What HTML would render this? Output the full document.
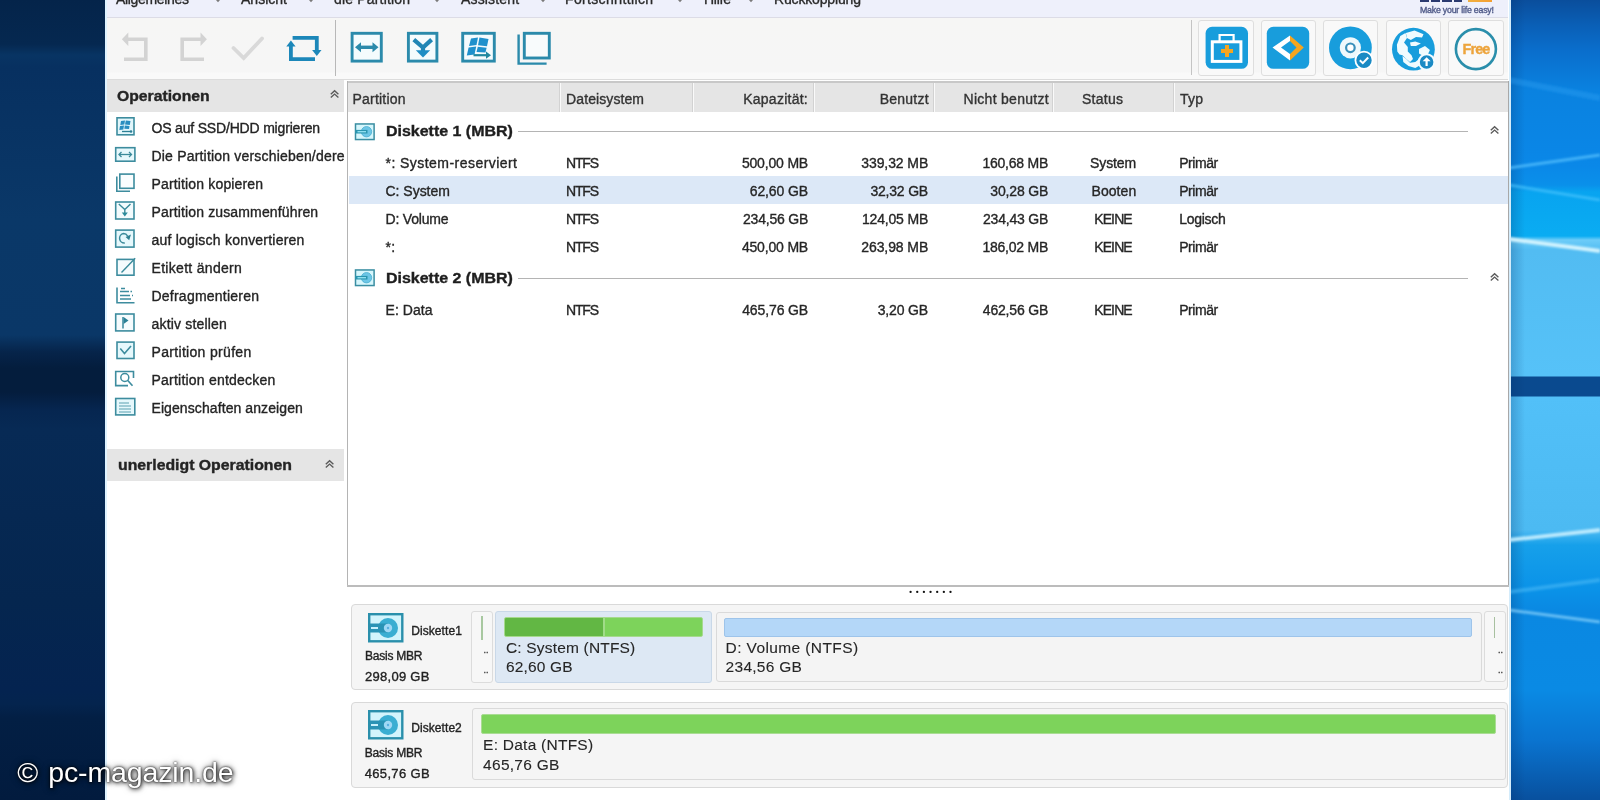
<!DOCTYPE html>
<html><head><meta charset="utf-8"><title>Partition Assistant</title>
<style>
html,body{margin:0;padding:0}
body{width:1600px;height:800px;position:relative;overflow:hidden;background:#0a3868;font-family:"Liberation Sans",sans-serif}
.b{position:absolute;box-sizing:content-box}
.t{position:absolute;white-space:nowrap;font-family:"Liberation Sans",sans-serif;-webkit-text-stroke:0.35px currentColor}
</style></head><body><div style="position:absolute;left:0;top:0;width:1600px;height:800px;overflow:hidden;filter:blur(0.45px)">
<div class="b" style="left:0;top:0;width:106px;height:800px;background:linear-gradient(to bottom,#04244a 0px,#052850 44px,#083463 55px,#073060 68px,#0a3868 220px,#0a3767 335px,#06244a 352px,#041d3d 368px,#041d3d 392px,#062650 410px,#072a55 430px,#05264f 600px,#042350 690px,#04244e 704px,#031f44 718px,#021b3e 800px)"></div>
<svg class="b" style="left:1509px;top:0" width="91" height="800" viewBox="0 0 91 800">
<defs>
<linearGradient id="rg" x1="0" y1="0" x2="0" y2="800" gradientUnits="userSpaceOnUse">
<stop offset="0.00000" stop-color="#0a4e9c"/>
<stop offset="0.03125" stop-color="#0a5fb6"/>
<stop offset="0.06250" stop-color="#0a6ecc"/>
<stop offset="0.09375" stop-color="#0a7ad8"/>
<stop offset="0.11250" stop-color="#0a82e0"/>
<stop offset="0.18750" stop-color="#0a86e6"/>
<stop offset="0.20750" stop-color="#0a88e8"/>
<stop offset="0.23125" stop-color="#0a90ea"/>
<stop offset="0.24000" stop-color="#08a4f0"/>
<stop offset="0.29500" stop-color="#0aacf2"/>
<stop offset="0.30000" stop-color="#6cccf8"/>
<stop offset="0.31250" stop-color="#52bcf2"/>
<stop offset="0.47000" stop-color="#56c2f8"/>
<stop offset="0.47125" stop-color="#0a4a8f"/>
<stop offset="0.49500" stop-color="#0a4a8f"/>
<stop offset="0.49625" stop-color="#52c0f8"/>
<stop offset="0.66250" stop-color="#4cbaf2"/>
<stop offset="0.68125" stop-color="#16a0ea"/>
<stop offset="0.73750" stop-color="#0a92e8"/>
<stop offset="0.76500" stop-color="#0a88e2"/>
<stop offset="0.86250" stop-color="#0a8ae4"/>
<stop offset="0.92500" stop-color="#0a74d0"/>
<stop offset="1.00000" stop-color="#08509e"/>
</linearGradient>
<linearGradient id="sh" x1="0" y1="0" x2="1" y2="0"><stop offset="0" stop-color="#002a60" stop-opacity="0.22"/><stop offset="1" stop-color="#002a60" stop-opacity="0"/></linearGradient>
<filter id="bl" x="-10%" y="-50%" width="120%" height="200%"><feGaussianBlur stdDeviation="1"/></filter>
</defs>
<rect x="0" y="0" width="91" height="800" fill="url(#rg)"/>
<rect x="2" y="0" width="14" height="800" fill="url(#sh)"/>
<g filter="url(#bl)">
<path d="M0 80 L91 98" stroke="rgba(60,170,250,0.3)" stroke-width="6"/>
<path d="M0 168 L91 155" stroke="rgba(90,195,255,0.7)" stroke-width="3"/>
<path d="M0 185 L91 200" stroke="rgba(80,200,255,0.6)" stroke-width="3"/>
<path d="M0 239 L91 251" stroke="rgba(215,245,255,0.95)" stroke-width="4"/>
<path d="M0 540 L91 530" stroke="rgba(200,240,255,0.9)" stroke-width="4"/>
<path d="M0 592 L91 580" stroke="rgba(90,195,250,0.45)" stroke-width="4"/>
<path d="M0 610 L91 622" stroke="rgba(150,218,255,0.65)" stroke-width="3"/>
</g>
</svg>
<div class="b" style="left:105px;top:0px;width:1406px;height:800px;background:#fff"></div>
<div class="b" style="left:105px;top:0px;width:2px;height:800px;background:#dff3ff"></div>
<div class="b" style="left:1509px;top:0px;width:2px;height:800px;background:#d4ecfb"></div>
<div class="b" style="left:107px;top:0px;width:1401px;height:17px;background:#eef0fb"></div>
<div class="b" style="left:107px;top:17px;width:1401px;height:1px;background:#dcdce6"></div>
<div class="b" style="left:107px;top:18px;width:1401px;height:61px;background:linear-gradient(to bottom,#f6f6f5 0,#f6f6f6 54px,#f9f9f9 55px,#f9f9f9 61px)"></div>
<div class="b" style="left:107px;top:79px;width:1401px;height:1px;background:#dcdcdc"></div>
<div class="t" style="left:116.00px;top:-7.55px;font-size:14px;line-height:14px;color:#2a2a2a;letter-spacing:-0.330px;">Allgemeines</div>
<div class="t" style="left:241.00px;top:-7.55px;font-size:14px;line-height:14px;color:#2a2a2a;letter-spacing:0.013px;">Ansicht</div>
<div class="t" style="left:334.00px;top:-7.55px;font-size:14px;line-height:14px;color:#2a2a2a;letter-spacing:0.173px;">die Partition</div>
<div class="t" style="left:461.00px;top:-7.55px;font-size:14px;line-height:14px;color:#2a2a2a;letter-spacing:0.154px;">Assistent</div>
<div class="t" style="left:565.00px;top:-7.55px;font-size:14px;line-height:14px;color:#2a2a2a;letter-spacing:0.341px;">Fortschrittlich</div>
<div class="t" style="left:704.00px;top:-7.55px;font-size:14px;line-height:14px;color:#2a2a2a;letter-spacing:-0.250px;">Hilfe</div>
<div class="t" style="left:774.00px;top:-7.55px;font-size:14px;line-height:14px;color:#2a2a2a;letter-spacing:-0.160px;">Rückkopplung</div>
<svg class="b" style="left:216px;top:0" width="4" height="3"><path d="M0 0 L4 0 L2 2.2 Z" fill="#7a7a7a"/></svg>
<svg class="b" style="left:309px;top:0" width="4" height="3"><path d="M0 0 L4 0 L2 2.2 Z" fill="#7a7a7a"/></svg>
<svg class="b" style="left:435px;top:0" width="4" height="3"><path d="M0 0 L4 0 L2 2.2 Z" fill="#7a7a7a"/></svg>
<svg class="b" style="left:541px;top:0" width="4" height="3"><path d="M0 0 L4 0 L2 2.2 Z" fill="#7a7a7a"/></svg>
<svg class="b" style="left:678px;top:0" width="4" height="3"><path d="M0 0 L4 0 L2 2.2 Z" fill="#7a7a7a"/></svg>
<svg class="b" style="left:749px;top:0" width="4" height="3"><path d="M0 0 L4 0 L2 2.2 Z" fill="#7a7a7a"/></svg>
<div class="b" style="left:1420px;top:0px;width:9px;height:1.6px;background:#2a3a70"></div>
<div class="b" style="left:1431px;top:0px;width:9px;height:1.6px;background:#2a3a70"></div>
<div class="b" style="left:1442px;top:0px;width:10px;height:1.6px;background:#2a3a70"></div>
<div class="b" style="left:1454px;top:0px;width:8px;height:1.6px;background:#2a3a70"></div>
<div class="b" style="left:1468px;top:0px;width:24px;height:2.2px;background:linear-gradient(to right,#f0b040,#f5a030)"></div>
<div class="t" style="left:1420.00px;top:5.65px;font-size:8.8px;line-height:8.8px;color:#4f5a88;letter-spacing:-0.225px;">Make your life easy!</div>
<div class="b" style="left:335px;top:20px;width:1px;height:56px;background:#b8b8b8"></div>
<div class="b" style="left:1191px;top:20px;width:1px;height:55px;background:#c4c4c4"></div>
<svg class="b" style="left:0;top:0" width="1600" height="90" viewBox="0 0 1600 90">
<g fill="none" stroke-linejoin="miter">
<path d="M127 39.3 H145.8 V59.3 H124" stroke="#d3d3d3" stroke-width="3.6"/>
<polygon points="121.9,39.3 128.3,32.5 128.3,46" fill="#d3d3d3"/>
<path d="M201 39.3 H182.2 V59.3 H204" stroke="#d3d3d3" stroke-width="3.6"/>
<polygon points="206.9,39.3 200.5,32.5 200.5,46" fill="#d3d3d3"/>
<path d="M233.5 48 L243.7 58 L262 38.5" stroke="#d9d9d9" stroke-width="3.8" stroke-linecap="round"/>
<path d="M290.9 45.5 V59.2 H315" stroke="#1c87b9" stroke-width="3.8"/>
<path d="M292.6 37.9 H316.8 V50.5" stroke="#1c87b9" stroke-width="3.8"/>
<polygon points="286.3,46.5 295.6,46.5 290.9,40.6" fill="#1c87b9"/>
<polygon points="312.1,50 321.5,50 316.8,56" fill="#1c87b9"/>
<rect x="352.1" y="33.3" width="29.2" height="27.8" stroke="#2b8aab" stroke-width="2.9" fill="#f4fbfd"/>
<path d="M359.5 47.3 H374" stroke="#2b8aab" stroke-width="3.4"/>
<polygon points="355,47.3 361,42.3 361,52.3" fill="#2b8aab"/>
<polygon points="378.5,47.3 372.5,42.3 372.5,52.3" fill="#2b8aab"/>
<rect x="408.4" y="33.3" width="28.5" height="27.8" stroke="#2b8aab" stroke-width="2.9" fill="#f4fbfd"/>
<path d="M413.8 39.6 L423 47.5 L431.6 39.6" stroke="#2186b5" stroke-width="4.2"/>
<path d="M423 46 V52" stroke="#2186b5" stroke-width="4.2"/>
<polygon points="415.8,50.3 430.2,50.3 423,57.5" fill="#1f8dc4"/>
<rect x="462.7" y="33.3" width="31.6" height="27.8" stroke="#2b8aab" stroke-width="2.9" fill="#f4fbfd"/>
<g fill="#1e90cc">
<polygon points="471,38.5 478,37.5 476.5,45 469,46"/>
<polygon points="479.5,37.6 488.5,39 487,46.2 478,45.2"/>
<polygon points="468.6,47.5 476.2,46.6 474.5,54.5 466.8,55.5"/>
<polygon points="477.8,46.8 486.6,47.8 485.5,52.5 476.5,52"/>
</g>
<path d="M473.5 55.2 H487" stroke="#21889f" stroke-width="2.2"/>
<polygon points="491,55.2 486,51.6 486,58.8" fill="#21889f"/>
<rect x="524.3" y="33.3" width="25" height="24.7" stroke="#2b8aab" stroke-width="2.9" fill="#f8fbfc"/>
<path d="M518.6 34.6 V63.6 H546.6" stroke="#2b8aab" stroke-width="2.4"/>
</g>
</svg>
<div class="b" style="left:1198px;top:20.2px;width:54.0px;height:54px;border:1px solid #dedede;border-radius:3px;background:#f9f9f9"></div>
<div class="b" style="left:1261px;top:20.2px;width:53.2px;height:54px;border:1px solid #dedede;border-radius:3px;background:#f9f9f9"></div>
<div class="b" style="left:1323.3px;top:20.2px;width:52.7px;height:54px;border:1px solid #dedede;border-radius:3px;background:#f9f9f9"></div>
<div class="b" style="left:1385.9px;top:20.2px;width:53.5px;height:54px;border:1px solid #dedede;border-radius:3px;background:#f9f9f9"></div>
<div class="b" style="left:1448.4px;top:20.2px;width:54.0px;height:54px;border:1px solid #dedede;border-radius:3px;background:#f9f9f9"></div>
<svg class="b" style="left:1190px;top:15px" width="320" height="70" viewBox="1190 15 320 70">
<rect x="1205.6" y="26.8" width="42.4" height="42" rx="6.5" fill="#189ddc"/>
<path d="M1219.6 41 V35 H1233.6 V41" fill="none" stroke="#fff" stroke-width="2.2"/>
<rect x="1212.3" y="41.8" width="28.6" height="19.6" fill="none" stroke="#fff" stroke-width="3"/>
<path d="M1227 45 V57 M1221 51 H1233" stroke="#f5a51f" stroke-width="4"/>
<rect x="1266.8" y="26.8" width="42.4" height="42" rx="6.5" fill="#189ddc"/>
<polygon points="1290,35.5 1272.5,47.6 1290,60.5 1290,54 1281,47.6 1290,41" fill="#fff"/>
<polygon points="1290,35.5 1303.8,47.6 1290,60.5 1290,54 1296.5,47.6 1290,41" fill="#f5a51f"/>
<circle cx="1350.4" cy="47.8" r="21.4" fill="#189ddc"/>
<circle cx="1350.4" cy="47.8" r="10.6" fill="#eef8fc"/>
<circle cx="1350.4" cy="47.8" r="4.3" fill="#fff" stroke="#3a90bb" stroke-width="2.2"/>
<circle cx="1364" cy="60.2" r="8.6" fill="#1a8ac4" stroke="#fff" stroke-width="1.8"/>
<path d="M1359.8 60.3 L1362.8 63.2 L1368.2 57.5" fill="none" stroke="#fff" stroke-width="2"/>
<circle cx="1413.4" cy="49.2" r="21.4" fill="#189ddc"/>
<g fill="#f0fbfe">
<polygon points="1400.3,36.1 1405.5,33.1 1407.0,38.0 1404.0,42.5 1407.8,47.0 1407.8,51.5 1411.5,55.3 1413.0,59.0 1410.0,62.0 1406.3,59.0 1402.5,55.3 1399.5,54.5 1397.3,51.5 1396.9,44.8"/>
<polygon points="1405.9,33.1 1414.5,30.5 1423.5,34.3 1422.0,37.6 1416.0,36.9 1410.8,39.9 1407.0,38.0"/>
<polygon points="1410.0,42.5 1415.3,41.4 1420.9,43.6 1416.0,45.9 1410.8,45.9"/>
<polygon points="1419.0,48.9 1425.0,45.9 1429.9,50.0 1428.0,54.1 1422.0,55.3 1419.0,53.4"/>
<polygon points="1402.5,56.0 1406.3,59.0 1410.0,62.8 1415.3,62.0 1419.0,59.0 1420.5,65.0 1415.3,68.0 1408.5,66.1 1403.3,62.0"/>
</g>
<circle cx="1426.6" cy="62" r="7.8" fill="#1a8ac4" stroke="#f4fcff" stroke-width="2"/>
<path d="M1426.6 66 V59.5" stroke="#fff" stroke-width="2.2"/>
<polygon points="1422.6,61.3 1430.6,61.3 1426.6,57.2" fill="#fff"/>
<circle cx="1475.9" cy="49.1" r="20" fill="none" stroke="#2a8eab" stroke-width="2.6"/>
</svg>
<div class="t" style="left:1462.40px;top:42.13px;font-size:14.5px;line-height:14.5px;color:#eda43c;font-weight:bold;letter-spacing:-0.865px;">Free</div>
<div class="b" style="left:107px;top:80px;width:237px;height:31.5px;background:#e5e5e5"></div>
<div class="t" style="left:117.40px;top:88.75px;font-size:14px;line-height:14px;color:#242424;transform:scaleX(1.1230);transform-origin:0 0;font-weight:bold;">Operationen</div>
<svg class="b" style="left:329px;top:88px" width="12" height="12"><path d="M1.8 6.2 L5.6 2.7 L9.4 6.2 M1.8 9.6 L5.6 6.1 L9.4 9.6" fill="none" stroke="#5a5a5a" stroke-width="1.4"/></svg>
<div class="b" style="left:107px;top:449.2px;width:237px;height:31.5px;background:#e5e5e5"></div>
<div class="t" style="left:117.60px;top:457.95px;font-size:14px;line-height:14px;color:#242424;transform:scaleX(1.1292);transform-origin:0 0;font-weight:bold;">unerledigt Operationen</div>
<svg class="b" style="left:324px;top:458px" width="12" height="12"><path d="M1.8 6.2 L5.6 2.7 L9.4 6.2 M1.8 9.6 L5.6 6.1 L9.4 9.6" fill="none" stroke="#5a5a5a" stroke-width="1.4"/></svg>
<div class="b" style="left:0;top:0;width:345px;height:800px;overflow:hidden">
<div class="t" style="left:151.50px;top:120.65px;font-size:14px;line-height:14px;color:#242424;letter-spacing:-0.182px;">OS auf SSD/HDD migrieren</div>
<div class="t" style="left:151.50px;top:148.65px;font-size:14px;line-height:14px;color:#242424;letter-spacing:0.189px;">Die Partition verschieben/dere</div>
<div class="t" style="left:151.50px;top:176.65px;font-size:14px;line-height:14px;color:#242424;letter-spacing:0.154px;">Partition kopieren</div>
<div class="t" style="left:151.50px;top:204.65px;font-size:14px;line-height:14px;color:#242424;letter-spacing:0.141px;">Partition zusammenführen</div>
<div class="t" style="left:151.50px;top:232.65px;font-size:14px;line-height:14px;color:#242424;letter-spacing:0.216px;">auf logisch konvertieren</div>
<div class="t" style="left:151.50px;top:260.65px;font-size:14px;line-height:14px;color:#242424;letter-spacing:0.302px;">Etikett ändern</div>
<div class="t" style="left:151.50px;top:288.65px;font-size:14px;line-height:14px;color:#242424;letter-spacing:0.229px;">Defragmentieren</div>
<div class="t" style="left:151.50px;top:316.65px;font-size:14px;line-height:14px;color:#242424;letter-spacing:0.179px;">aktiv stellen</div>
<div class="t" style="left:151.50px;top:344.65px;font-size:14px;line-height:14px;color:#242424;letter-spacing:0.319px;">Partition prüfen</div>
<div class="t" style="left:151.50px;top:372.65px;font-size:14px;line-height:14px;color:#242424;letter-spacing:0.220px;">Partition entdecken</div>
<div class="t" style="left:151.50px;top:400.65px;font-size:14px;line-height:14px;color:#242424;letter-spacing:0.088px;">Eigenschaften anzeigen</div>
</div>
<svg class="b" style="left:105px;top:110px" width="40" height="320" viewBox="105 110 40 320">
<g fill="none" stroke="#3d8c9e" stroke-width="1.6">
<rect x="117" y="117.8" width="17" height="17" fill="#e2f6fb"/>
<rect x="115.7" y="147.7" width="19.2" height="13.5" fill="#e6f8fc"/>
<rect x="119.8" y="174.1" width="14.2" height="14.2" fill="#fafdfe"/>
<path d="M116.8 176.5 V191.3 H130"/>
<rect x="115.7" y="202" width="18.3" height="17" fill="#f3fbfd"/>
<rect x="115.7" y="230.1" width="18.3" height="17" fill="#e6f8fc"/>
<rect x="117" y="259.4" width="17" height="15.8" fill="#f5fbfd"/>
<path d="M117 287.5 V302.8 H134.5"/>
<rect x="115.7" y="314" width="18.3" height="16.9" fill="#f5fbfd"/>
<rect x="117" y="342.1" width="17" height="16.4" fill="#e6f8fc"/>
<path d="M133.5 378 V371.5 H115.7 V385.6 H128"/>
<rect x="115.7" y="398.5" width="19.1" height="16.4" fill="#e6f8fc"/>
</g>
<g fill="#2a8ec0">
<polygon points="121,121 125,120.5 124.3,124.5 120.3,125"/>
<polygon points="125.8,120.5 130.5,121 129.8,125 125,124.5"/>
<polygon points="120,126 124,125.5 123.3,129.5 119.3,130"/>
<polygon points="124.8,125.5 129.5,126 129,129 124.3,128.8"/>
</g>
<path d="M122 131.5 H130" stroke="#2b7f95" stroke-width="1.3"/>
<circle cx="131" cy="131.5" r="1.3" fill="#2b7f95"/>
<path d="M119.5 154.5 H131" stroke="#3a8a9a" stroke-width="1.3"/>
<path d="M121.5 152 L119 154.5 L121.5 157 M129 152 L131.5 154.5 L129 157" fill="none" stroke="#3a8a9a" stroke-width="1.3"/>
<path d="M118.8 204 L124.8 209.5 L130.5 204 M124.8 209 V214" fill="none" stroke="#3a8a9a" stroke-width="1.4"/>
<polygon points="121.8,212.5 127.8,212.5 124.8,216.5" fill="#2a8a9a"/>
<path d="M124.8 243 A4.8 4.8 0 0 1 123.5 233.5 A4.8 4.8 0 0 1 127.6 236" fill="none" stroke="#3a8a9a" stroke-width="1.5"/>
<polygon points="125.6,237 131,234.6 129.2,240.2" fill="#2f7f90"/>
<path d="M121.5 272.5 L135.2 258.2" stroke="#3a8a9a" stroke-width="1.4"/>
<g stroke="#3d8c9e" stroke-width="1.3">
<path d="M120 291.5 H129 M120 295.5 H130 M120 299 H131"/>
<path d="M121 288.5 H125 M130.5 291.5 H132 M132 295.5 H133"/>
</g>
<path d="M123 317 V328.5" stroke="#2a7f95" stroke-width="1.4"/>
<polygon points="123.6,317 128.5,320.5 123.6,324" fill="#2a7f95"/>
<path d="M120.3 348.5 L124.5 353.5 L131 346" fill="none" stroke="#3d8c9e" stroke-width="1.6"/>
<circle cx="124.8" cy="377.5" r="4" fill="none" stroke="#3d8c9e" stroke-width="1.5"/>
<path d="M127.8 380.5 L132.5 385.8" stroke="#3d8c9e" stroke-width="1.6"/>
<path d="M119 403 H129 M119 406 H131 M119 409 H131 M119 412 H131" stroke="#5aa0b0" stroke-width="1"/>
</svg>
<div class="b" style="left:347px;top:81px;width:1161.5px;height:2px;background:#c8c8c8"></div>
<div class="b" style="left:348px;top:83px;width:1160px;height:28.5px;background:#e5e5e5"></div>
<div class="b" style="left:347px;top:81px;width:1px;height:505px;background:#b4b4b4"></div>
<div class="b" style="left:1508px;top:81px;width:1px;height:505px;background:#a8a8a8"></div>
<div class="b" style="left:347px;top:585px;width:1161.5px;height:1.5px;background:#bcbcbc"></div>
<div class="b" style="left:559px;top:83px;width:1px;height:28.5px;background:#d2d2d2"></div>
<div class="b" style="left:560px;top:83px;width:1px;height:28.5px;background:#fafafa"></div>
<div class="b" style="left:692px;top:83px;width:1px;height:28.5px;background:#d2d2d2"></div>
<div class="b" style="left:693px;top:83px;width:1px;height:28.5px;background:#fafafa"></div>
<div class="b" style="left:813px;top:83px;width:1px;height:28.5px;background:#d2d2d2"></div>
<div class="b" style="left:814px;top:83px;width:1px;height:28.5px;background:#fafafa"></div>
<div class="b" style="left:933px;top:83px;width:1px;height:28.5px;background:#d2d2d2"></div>
<div class="b" style="left:934px;top:83px;width:1px;height:28.5px;background:#fafafa"></div>
<div class="b" style="left:1052px;top:83px;width:1px;height:28.5px;background:#d2d2d2"></div>
<div class="b" style="left:1053px;top:83px;width:1px;height:28.5px;background:#fafafa"></div>
<div class="b" style="left:1173px;top:83px;width:1px;height:28.5px;background:#d2d2d2"></div>
<div class="b" style="left:1174px;top:83px;width:1px;height:28.5px;background:#fafafa"></div>
<div class="t" style="left:352.50px;top:91.55px;font-size:14px;line-height:14px;color:#333;letter-spacing:0.202px;">Partition</div>
<div class="t" style="left:566.10px;top:91.55px;font-size:14px;line-height:14px;color:#333;letter-spacing:0.090px;">Dateisystem</div>
<div class="t" style="left:743.20px;top:91.55px;font-size:14px;line-height:14px;color:#333;letter-spacing:0.252px;">Kapazität:</div>
<div class="t" style="left:879.70px;top:91.55px;font-size:14px;line-height:14px;color:#333;letter-spacing:0.240px;">Benutzt</div>
<div class="t" style="left:963.50px;top:91.55px;font-size:14px;line-height:14px;color:#333;letter-spacing:0.284px;">Nicht benutzt</div>
<div class="t" style="left:1081.90px;top:91.55px;font-size:14px;line-height:14px;color:#333;letter-spacing:0.302px;">Status</div>
<div class="t" style="left:1180.00px;top:91.55px;font-size:14px;line-height:14px;color:#333;letter-spacing:0.280px;">Typ</div>
<div class="b" style="left:349px;top:176px;width:1158.5px;height:27.5px;background:#dce8f7"></div>
<div class="t" style="left:386.00px;top:123.75px;font-size:14px;line-height:14px;color:#1e1e1e;transform:scaleX(1.1400);transform-origin:0 0;font-weight:bold;">Diskette 1 (MBR)</div>
<div class="b" style="left:518px;top:131px;width:950px;height:1px;background:#b4b4b4"></div>
<svg class="b" style="left:1489px;top:124px" width="12" height="12"><path d="M1.8 6.2 L5.6 2.7 L9.4 6.2 M1.8 9.6 L5.6 6.1 L9.4 9.6" fill="none" stroke="#5a5a5a" stroke-width="1.4"/></svg>
<svg class="b" style="left:354px;top:121.5px" width="24" height="22" viewBox="354 121.5 24 22">
<rect x="355.5" y="123.45" width="18.6" height="15.6" fill="#d6f6fc" stroke="#3a8ea2" stroke-width="1.5"/>
<circle cx="366.5" cy="131.2" r="5.2" fill="#6cc6e6" stroke="#4aaed0" stroke-width="0.8"/>
<rect x="355.5" y="129.4" width="12" height="3.6" fill="#2a96b0"/>
<rect x="357.5" y="130.7" width="8.5" height="1.1" fill="#a8f2ff"/>
</svg>
<div class="t" style="left:386.00px;top:270.75px;font-size:14px;line-height:14px;color:#1e1e1e;transform:scaleX(1.1400);transform-origin:0 0;font-weight:bold;">Diskette 2 (MBR)</div>
<div class="b" style="left:518px;top:277.5px;width:950px;height:1px;background:#b4b4b4"></div>
<svg class="b" style="left:1489px;top:270.5px" width="12" height="12"><path d="M1.8 6.2 L5.6 2.7 L9.4 6.2 M1.8 9.6 L5.6 6.1 L9.4 9.6" fill="none" stroke="#5a5a5a" stroke-width="1.4"/></svg>
<svg class="b" style="left:354px;top:268px" width="24" height="22" viewBox="354 268 24 22">
<rect x="355.5" y="269.95" width="18.6" height="15.6" fill="#d6f6fc" stroke="#3a8ea2" stroke-width="1.5"/>
<circle cx="366.5" cy="277.7" r="5.2" fill="#6cc6e6" stroke="#4aaed0" stroke-width="0.8"/>
<rect x="355.5" y="275.9" width="12" height="3.6" fill="#2a96b0"/>
<rect x="357.5" y="277.2" width="8.5" height="1.1" fill="#a8f2ff"/>
</svg>
<div class="t" style="left:385.50px;top:155.75px;font-size:14px;line-height:14px;color:#262626;letter-spacing:0.452px;">*: System-reserviert</div>
<div class="t" style="left:566.00px;top:155.75px;font-size:14px;line-height:14px;color:#262626;letter-spacing:-1.180px;">NTFS</div>
<div class="t" style="left:741.90px;top:155.75px;font-size:14px;line-height:14px;color:#262626;letter-spacing:-0.174px;">500,00 MB</div>
<div class="t" style="left:861.30px;top:155.75px;font-size:14px;line-height:14px;color:#262626;letter-spacing:-0.099px;">339,32 MB</div>
<div class="t" style="left:982.40px;top:155.75px;font-size:14px;line-height:14px;color:#262626;letter-spacing:-0.224px;">160,68 MB</div>
<div class="t" style="left:1090.00px;top:155.75px;font-size:14px;line-height:14px;color:#262626;letter-spacing:-0.098px;">System</div>
<div class="t" style="left:1179.20px;top:155.75px;font-size:14px;line-height:14px;color:#262626;letter-spacing:-0.446px;">Primär</div>
<div class="t" style="left:385.50px;top:183.75px;font-size:14px;line-height:14px;color:#262626;letter-spacing:-0.018px;">C: System</div>
<div class="t" style="left:566.00px;top:183.75px;font-size:14px;line-height:14px;color:#262626;letter-spacing:-1.180px;">NTFS</div>
<div class="t" style="left:749.70px;top:183.75px;font-size:14px;line-height:14px;color:#262626;letter-spacing:-0.093px;">62,60 GB</div>
<div class="t" style="left:870.40px;top:183.75px;font-size:14px;line-height:14px;color:#262626;letter-spacing:-0.193px;">32,32 GB</div>
<div class="t" style="left:990.30px;top:183.75px;font-size:14px;line-height:14px;color:#262626;letter-spacing:-0.164px;">30,28 GB</div>
<div class="t" style="left:1091.50px;top:183.75px;font-size:14px;line-height:14px;color:#262626;letter-spacing:0.064px;">Booten</div>
<div class="t" style="left:1179.20px;top:183.75px;font-size:14px;line-height:14px;color:#262626;letter-spacing:-0.446px;">Primär</div>
<div class="t" style="left:385.50px;top:211.75px;font-size:14px;line-height:14px;color:#262626;letter-spacing:-0.201px;">D: Volume</div>
<div class="t" style="left:566.00px;top:211.75px;font-size:14px;line-height:14px;color:#262626;letter-spacing:-1.180px;">NTFS</div>
<div class="t" style="left:743.00px;top:211.75px;font-size:14px;line-height:14px;color:#262626;letter-spacing:-0.215px;">234,56 GB</div>
<div class="t" style="left:862.00px;top:211.75px;font-size:14px;line-height:14px;color:#262626;letter-spacing:-0.186px;">124,05 MB</div>
<div class="t" style="left:983.00px;top:211.75px;font-size:14px;line-height:14px;color:#262626;letter-spacing:-0.203px;">234,43 GB</div>
<div class="t" style="left:1094.20px;top:211.75px;font-size:14px;line-height:14px;color:#262626;letter-spacing:-0.875px;">KEINE</div>
<div class="t" style="left:1179.20px;top:211.75px;font-size:14px;line-height:14px;color:#262626;letter-spacing:-0.288px;">Logisch</div>
<div class="t" style="left:385.50px;top:239.75px;font-size:14px;line-height:14px;color:#262626;letter-spacing:0.400px;">*:</div>
<div class="t" style="left:566.00px;top:239.75px;font-size:14px;line-height:14px;color:#262626;letter-spacing:-1.180px;">NTFS</div>
<div class="t" style="left:741.90px;top:239.75px;font-size:14px;line-height:14px;color:#262626;letter-spacing:-0.174px;">450,00 MB</div>
<div class="t" style="left:861.30px;top:239.75px;font-size:14px;line-height:14px;color:#262626;letter-spacing:-0.099px;">263,98 MB</div>
<div class="t" style="left:982.40px;top:239.75px;font-size:14px;line-height:14px;color:#262626;letter-spacing:-0.224px;">186,02 MB</div>
<div class="t" style="left:1094.20px;top:239.75px;font-size:14px;line-height:14px;color:#262626;letter-spacing:-0.875px;">KEINE</div>
<div class="t" style="left:1179.20px;top:239.75px;font-size:14px;line-height:14px;color:#262626;letter-spacing:-0.446px;">Primär</div>
<div class="t" style="left:385.50px;top:302.75px;font-size:14px;line-height:14px;color:#262626;letter-spacing:0.040px;">E: Data</div>
<div class="t" style="left:566.00px;top:302.75px;font-size:14px;line-height:14px;color:#262626;letter-spacing:-1.180px;">NTFS</div>
<div class="t" style="left:742.20px;top:302.75px;font-size:14px;line-height:14px;color:#262626;letter-spacing:-0.115px;">465,76 GB</div>
<div class="t" style="left:877.70px;top:302.75px;font-size:14px;line-height:14px;color:#262626;letter-spacing:-0.147px;">3,20 GB</div>
<div class="t" style="left:982.80px;top:302.75px;font-size:14px;line-height:14px;color:#262626;letter-spacing:-0.178px;">462,56 GB</div>
<div class="t" style="left:1094.20px;top:302.75px;font-size:14px;line-height:14px;color:#262626;letter-spacing:-0.875px;">KEINE</div>
<div class="t" style="left:1179.20px;top:302.75px;font-size:14px;line-height:14px;color:#262626;letter-spacing:-0.446px;">Primär</div>
<svg class="b" style="left:905px;top:587px" width="50" height="10"><circle cx="5.60" cy="4.9" r="1.15" fill="#111"/><circle cx="12.25" cy="4.9" r="1.15" fill="#111"/><circle cx="18.90" cy="4.9" r="1.15" fill="#111"/><circle cx="25.55" cy="4.9" r="1.15" fill="#111"/><circle cx="32.20" cy="4.9" r="1.15" fill="#111"/><circle cx="38.85" cy="4.9" r="1.15" fill="#111"/><circle cx="45.50" cy="4.9" r="1.15" fill="#111"/></svg>
<div class="b" style="left:351px;top:604px;width:1154.5px;height:84px;border:1px solid #d9d9d9;border-radius:4px;background:#f5f5f5"></div>
<svg class="b" style="left:367px;top:612px" width="38" height="32" viewBox="367 612 38 32">
<rect x="369.2" y="614.2" width="33.1" height="27.1" fill="#d2f4fc" stroke="#2a8fab" stroke-width="2.4"/>
<circle cx="388" cy="628" r="10" fill="#3aaed2"/>
<rect x="370" y="623.5" width="18" height="9" fill="#2a93b5"/>
<rect x="371" y="627" width="7" height="2" fill="#c8f0fc"/>
<circle cx="388" cy="628" r="4.2" fill="#9fd8f5"/>
<circle cx="388" cy="628" r="1.2" fill="#5ab0e0"/>
</svg>
<div class="t" style="left:411.25px;top:624.59px;font-size:12px;line-height:12px;color:#222;letter-spacing:0.070px;">Diskette1</div>
<div class="t" style="left:365.00px;top:649.84px;font-size:12px;line-height:12px;color:#222;letter-spacing:-0.230px;">Basis MBR</div>
<div class="t" style="left:365.00px;top:669.60px;font-size:13px;line-height:13px;color:#222;letter-spacing:0.283px;">298,09 GB</div>
<div class="b" style="left:471.25px;top:611.25px;width:19.25px;height:69.75px;border:1px solid #dcdcdc;border-radius:3px;background:#f7f7f7"></div>
<div class="b" style="left:481px;top:616px;width:1.8px;height:24px;background:#a8c8a0"></div>
<div class="t" style="left:483.50px;top:645.88px;font-size:9px;line-height:9px;color:#444;">..</div>
<div class="t" style="left:483.50px;top:665.88px;font-size:9px;line-height:9px;color:#444;">..</div>
<div class="b" style="left:494.6px;top:611.4px;width:215.8px;height:69.6px;border:1px solid #c9d8e8;border-radius:3px;background:#dde8f4"></div>
<div class="b" style="left:504.4px;top:617px;width:196.2px;height:17.6px;border:1px solid #a6d98e;border-radius:2px;background:linear-gradient(to right,#62b744 0,#62b744 98px,#a0dc88 98px,#a0dc88 99.5px,#7dd35b 99.5px)"></div>
<div class="t" style="left:506.00px;top:639.68px;font-size:15.5px;line-height:15.5px;color:#222;letter-spacing:0.176px;-webkit-text-stroke:0.1px currentColor;color:#262626;">C: System (NTFS)</div>
<div class="t" style="left:506.00px;top:659.48px;font-size:15.5px;line-height:15.5px;color:#222;letter-spacing:0.159px;-webkit-text-stroke:0.1px currentColor;color:#262626;">62,60 GB</div>
<div class="b" style="left:715.6px;top:611.9px;width:764.2px;height:68.6px;border:1px solid #dadada;border-radius:3px;background:#f4f4f4"></div>
<div class="b" style="left:723.75px;top:617.5px;width:745.95px;height:17.4px;border:1px solid #9ec4ea;border-radius:2px;background:#b4d7f8"></div>
<div class="t" style="left:725.60px;top:639.88px;font-size:15.5px;line-height:15.5px;color:#222;letter-spacing:0.391px;-webkit-text-stroke:0.1px currentColor;color:#262626;">D: Volume (NTFS)</div>
<div class="t" style="left:725.60px;top:659.38px;font-size:15.5px;line-height:15.5px;color:#222;letter-spacing:0.276px;-webkit-text-stroke:0.1px currentColor;color:#262626;">234,56 GB</div>
<div class="b" style="left:1483.5px;top:610.7px;width:20px;height:69.3px;border:1px solid #dcdcdc;border-radius:3px;background:#f7f7f7"></div>
<div class="b" style="left:1493.7px;top:616.6px;width:1.8px;height:21.4px;background:#a8c0a0"></div>
<div class="t" style="left:1498.01px;top:645.88px;font-size:9px;line-height:9px;color:#444;">..</div>
<div class="t" style="left:1498.01px;top:665.88px;font-size:9px;line-height:9px;color:#444;">..</div>
<div class="b" style="left:351px;top:702px;width:1154.5px;height:84px;border:1px solid #d9d9d9;border-radius:4px;background:#f5f5f5"></div>
<svg class="b" style="left:367px;top:709.3px" width="38" height="32" viewBox="367 709.3 38 32">
<rect x="369.2" y="711.5" width="33.1" height="27.1" fill="#d2f4fc" stroke="#2a8fab" stroke-width="2.4"/>
<circle cx="388" cy="725.3" r="10" fill="#3aaed2"/>
<rect x="370" y="720.8" width="18" height="9" fill="#2a93b5"/>
<rect x="371" y="724.3" width="7" height="2" fill="#c8f0fc"/>
<circle cx="388" cy="725.3" r="4.2" fill="#9fd8f5"/>
<circle cx="388" cy="725.3" r="1.2" fill="#5ab0e0"/>
</svg>
<div class="t" style="left:411.30px;top:721.54px;font-size:12px;line-height:12px;color:#222;letter-spacing:0.058px;">Diskette2</div>
<div class="t" style="left:364.70px;top:746.74px;font-size:12px;line-height:12px;color:#222;letter-spacing:-0.205px;">Basis MBR</div>
<div class="t" style="left:364.70px;top:766.90px;font-size:13px;line-height:13px;color:#222;letter-spacing:0.345px;">465,76 GB</div>
<div class="b" style="left:471.5px;top:708.1px;width:1032.75px;height:69.9px;border:1px solid #dadada;border-radius:3px;background:#f5f5f5"></div>
<div class="b" style="left:481.25px;top:714.4px;width:1012.5px;height:17.35px;border:1px solid #a9dc93;border-radius:2px;background:#7dd35b"></div>
<div class="t" style="left:483.10px;top:736.88px;font-size:15.5px;line-height:15.5px;color:#222;letter-spacing:0.247px;-webkit-text-stroke:0.1px currentColor;color:#262626;">E: Data (NTFS)</div>
<div class="t" style="left:483.10px;top:756.88px;font-size:15.5px;line-height:15.5px;color:#222;letter-spacing:0.276px;-webkit-text-stroke:0.1px currentColor;color:#262626;">465,76 GB</div>
<div class="t" style="left:17.20px;top:757.87px;font-size:28.5px;line-height:28.5px;color:#fff;-webkit-text-stroke:0;text-shadow:0 0 2px rgba(0,0,0,.9),1px 1px 4px rgba(0,0,0,.9),0 0 7px rgba(0,0,0,.6);">©</div>
<div class="t" style="left:48.25px;top:758.12px;font-size:28.5px;line-height:28.5px;color:#fff;letter-spacing:-0.142px;-webkit-text-stroke:0;text-shadow:0 0 2px rgba(0,0,0,.9),1px 1px 4px rgba(0,0,0,.9),0 0 7px rgba(0,0,0,.6);">pc-magazin.de</div>
</div></body></html>
